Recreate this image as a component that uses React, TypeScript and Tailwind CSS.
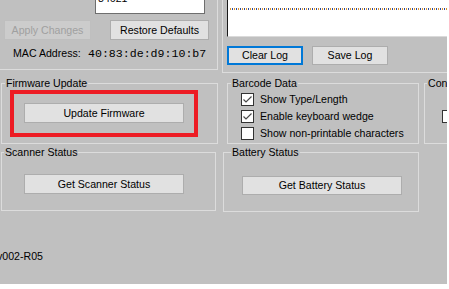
import React from "react";

function Btn({ className = "", children }: { className?: string; children: React.ReactNode }) {
  return (
    <div className={`flex items-center justify-center bg-[#e1e1e1] border border-[#adadad] shrink-0 ${className}`}>
      {children}
    </div>
  );
}

function Group({
  className = "",
  legend,
  legendClass = "",
  children,
}: {
  className?: string;
  legend: string;
  legendClass?: string;
  children?: React.ReactNode;
}) {
  return (
    <fieldset className={`border border-[#dcdcdc] shrink-0 min-w-0 ${className}`}>
      <legend className={`px-[1px] leading-[13px] whitespace-nowrap ${legendClass}`}>{legend}</legend>
      {children}
    </fieldset>
  );
}

function Check({ checked, label }: { checked: boolean; label?: string }) {
  return (
    <div className="flex items-center h-[17px]">
      <div className="w-[13px] h-[13px] bg-white border border-[#333333] shrink-0 flex items-center justify-center">
        {checked && (
          <svg width="11" height="11" viewBox="0 0 11 11">
            <path d="M1.5 5.5 L4 8 L9.5 2.5" fill="none" stroke="#4a4a4a" strokeWidth="1.2" />
          </svg>
        )}
      </div>
      {label && <span className="ml-[6px] whitespace-nowrap">{label}</span>}
    </div>
  );
}

export default function App() {
  return (
    <div className="w-[449px] h-[289px] bg-white overflow-hidden">
      <div className="w-[447px] h-[284px] bg-[#c0c0c0] overflow-hidden text-black text-[10.6px] leading-[13px] font-['Liberation_Sans',Arial,sans-serif]">
        {/* Row A */}
        <div className="flex items-start">
          <div className="w-[218px] h-[70px] border-r border-b border-[#dcdcdc] shrink-0">
            <div className="ml-[95px] w-[110px] h-[14px] bg-white border-x border-b border-[#6e6e6e] overflow-hidden">
              <div className="-mt-[8px] ml-[2px] leading-[13px]">84621</div>
            </div>
            <div className="flex mt-[6px]">
              <div className="ml-[4px] w-[87px] h-[20px] bg-[#cccccc] border border-[#bfbfbf] text-[#a0a0a0] flex items-center justify-center shrink-0">
                Apply Changes
              </div>
              <Btn className="ml-[19px] w-[99px] h-[20px]">Restore Defaults</Btn>
            </div>
            <div className="flex items-center mt-[7px] h-[13px]">
              <span className="ml-[13px] w-[75px] whitespace-nowrap">MAC Address:</span>
              <span className="font-['Liberation_Mono','Courier_New',monospace] text-[11.6px] whitespace-nowrap">
                40:83:de:d9:10:b7
              </span>
            </div>
          </div>
          <div className="ml-[4px] flex-1 h-[73px] border-l border-b border-[#dcdcdc]">
            <div className="ml-[4px] h-[37px] bg-white border-l border-l-[#1a1a1a] border-b border-b-[#dadada] pt-[8px]">
              <div className="ml-[2px] h-[2px] bg-[repeating-linear-gradient(90deg,#d9902a_0px,#d9902a_1px,#ffffff_1px,#ffffff_2px,#2a4a9a_2px,#2a4a9a_3px,#ffffff_3px,#ffffff_4px)]" />
            </div>
            <div className="flex mt-[9px] ml-[4px]">
              <div className="w-[76px] h-[19px] bg-[#e1e1e1] border-2 border-[#0078d7] flex items-center justify-center shrink-0">
                Clear Log
              </div>
              <Btn className="ml-[9px] w-[76px] h-[19px]">Save Log</Btn>
            </div>
          </div>
        </div>

        {/* Row B */}
        <div className="flex items-start">
          <div className="w-[218px] shrink-0 flex flex-col">
            <Group className="mt-[4px] ml-[1px] w-[217px] h-[67px]" legend="Firmware Update" legendClass="ml-[3px]">
              <div className="ml-[8px] w-[188px] h-[47px] border-4 border-[#ed1c24] flex justify-center pt-[9px]">
                <Btn className="w-[160px] h-[20px]">Update Firmware</Btn>
              </div>
            </Group>
            <Group className="mt-[2px] ml-[1px] w-[215px] h-[65px]" legend="Scanner Status" legendClass="ml-[2px]">
              <div className="pt-[15px] ml-[22px]">
                <Btn className="w-[160px] h-[20px]">Get Scanner Status</Btn>
              </div>
            </Group>
            <div className="mt-[39px] -ml-[3px] whitespace-nowrap">v002-R05</div>
          </div>
          <div className="flex flex-col">
            <div className="flex items-start">
              <Group className="mt-[4px] ml-[9px] w-[192px] h-[67px]" legend="Barcode Data" legendClass="ml-[3px]">
                <div className="pt-[1px] ml-[13px]">
                  <Check checked label="Show Type/Length" />
                  <Check checked label="Enable keyboard wedge" />
                  <Check checked={false} label="Show non-printable characters" />
                </div>
              </Group>
              <Group className="mt-[4px] ml-[5px] w-[90px] h-[67px]" legend="Configuration" legendClass="ml-[2px]">
                <div className="pt-[18px] ml-[17px]">
                  <Check checked={false} />
                </div>
              </Group>
            </div>
            <Group className="mt-[2px] ml-[5px] w-[196px] h-[66px]" legend="Battery Status" legendClass="ml-[7px]">
              <div className="pt-[17px] ml-[18px]">
                <Btn className="w-[160px] h-[19px]">Get Battery Status</Btn>
              </div>
            </Group>
          </div>
        </div>
      </div>
    </div>
  );
}
